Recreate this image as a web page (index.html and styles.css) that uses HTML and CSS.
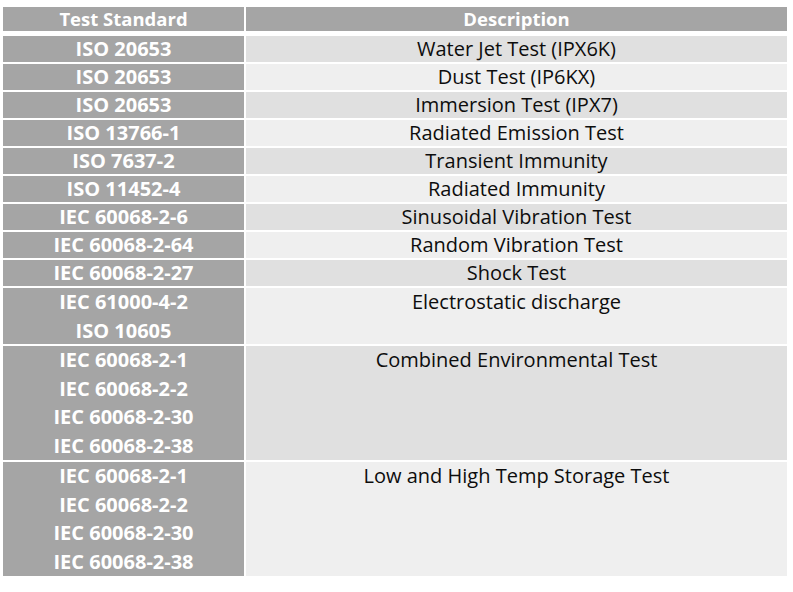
FILE: index.html
```html
<!DOCTYPE html>
<html>
<head>
<meta charset="utf-8">
<link rel="stylesheet" href="styles.css">
</head>
<body>
<div class="table">
  <div class="th">Test Standard</div>
  <div class="th">Description</div>

  <div class="std r1">ISO 20653</div>
  <div class="desc r1 dark">Water Jet Test (IPX6K)</div>

  <div class="std r1">ISO 20653</div>
  <div class="desc r1 light">Dust Test (IP6KX)</div>

  <div class="std r1">ISO 20653</div>
  <div class="desc r1 dark">Immersion Test (IPX7)</div>

  <div class="std r1">ISO 13766-1</div>
  <div class="desc r1 light">Radiated Emission Test</div>

  <div class="std r1">ISO 7637-2</div>
  <div class="desc r1 dark">Transient Immunity</div>

  <div class="std r1">ISO 11452-4</div>
  <div class="desc r1 light">Radiated Immunity</div>

  <div class="std r1">IEC 60068-2-6</div>
  <div class="desc r1 dark">Sinusoidal Vibration Test</div>

  <div class="std r1">IEC 60068-2-64</div>
  <div class="desc r1 light">Random Vibration Test</div>

  <div class="std r1">IEC 60068-2-27</div>
  <div class="desc r1 dark">Shock Test</div>

  <div class="std multi r2"><span>IEC 61000-4-2</span><span>ISO 10605</span></div>
  <div class="desc multi r2 light"><span>Electrostatic discharge</span></div>

  <div class="std multi r4"><span>IEC 60068-2-1</span><span>IEC 60068-2-2</span><span>IEC 60068-2-30</span><span>IEC 60068-2-38</span></div>
  <div class="desc multi r4 dark"><span>Combined Environmental Test</span></div>

  <div class="std multi r4"><span>IEC 60068-2-1</span><span>IEC 60068-2-2</span><span>IEC 60068-2-30</span><span>IEC 60068-2-38</span></div>
  <div class="desc multi r4 light"><span>Low and High Temp Storage Test</span></div>
</div>
</body>
</html>
```

FILE: styles.css
```css
html, body {
  margin: 0;
  padding: 0;
  background: #ffffff;
}

body {
  font-family: "Open Sans", "Liberation Sans", sans-serif;
  font-size: 20px;
}

.table {
  display: grid;
  grid-template-columns: 241px 541px;
  column-gap: 2px;
  row-gap: 2px;
  padding: 7px 0 0 3px;
  width: 784px;
}

.th {
  height: 24px;
  margin-bottom: 3px;
  background: #a5a5a5;
  color: #ffffff;
  font-weight: 700;
  font-size: 18.5px;
  display: flex;
  align-items: center;
  justify-content: center;
  line-height: 24px;
}

.std {
  background: #a5a5a5;
  color: #ffffff;
  font-weight: 700;
}

.desc {
  color: #0d0d0d;
}

.dark { background: #e0e0e0; }
.light { background: #efefef; }

.r1 {
  height: 26px;
  display: flex;
  align-items: center;
  justify-content: center;
  line-height: 26px;
}

.r2 { height: 56px; }
.r4 { height: 114px; }

.multi {
  display: flex;
  flex-direction: column;
  align-items: center;
  line-height: 28.5px;
}
```
